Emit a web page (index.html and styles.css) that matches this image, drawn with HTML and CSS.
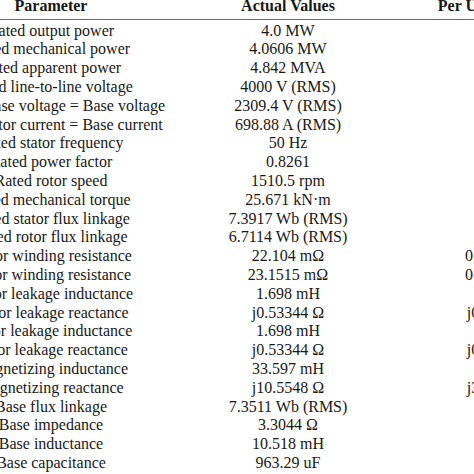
FILE: index.html
```html
<!DOCTYPE html>
<html>
<head>
<meta charset="utf-8">
<link rel="stylesheet" href="styles.css">
</head>
<body>
<div class="sheet">
  <div class="row head">
    <div>Parameter</div>
    <div>Actual Values</div>
    <div>Per Unit Values</div>
  </div>
  <div class="rows">
    <div class="row"><div>Rated output power</div><div>4.0 MW</div><div></div></div>
    <div class="row"><div>Rated mechanical power</div><div>4.0606 MW</div><div></div></div>
    <div class="row"><div>Rated apparent power</div><div>4.842 MVA</div><div></div></div>
    <div class="row"><div>Rated line-to-line voltage</div><div>4000 V (RMS)</div><div></div></div>
    <div class="row"><div>Rated phase voltage = Base voltage</div><div>2309.4 V (RMS)</div><div></div></div>
    <div class="row"><div>Rated stator current = Base current</div><div>698.88 A (RMS)</div><div></div></div>
    <div class="row"><div>Rated stator frequency</div><div>50 Hz</div><div></div></div>
    <div class="row"><div>Rated power factor</div><div>0.8261</div><div></div></div>
    <div class="row"><div>Rated rotor speed</div><div>1510.5 rpm</div><div></div></div>
    <div class="row"><div>Rated mechanical torque</div><div>25.671 kN·m</div><div></div></div>
    <div class="row"><div>Rated stator flux linkage</div><div>7.3917 Wb (RMS)</div><div></div></div>
    <div class="row"><div>Rated rotor flux linkage</div><div>6.7114 Wb (RMS)</div><div></div></div>
    <div class="row"><div>Stator winding resistance</div><div>22.104 mΩ</div><div>0.00669</div></div>
    <div class="row"><div>Rotor winding resistance</div><div>23.1515 mΩ</div><div>0.00701</div></div>
    <div class="row"><div>Stator leakage inductance</div><div>1.698 mH</div><div></div></div>
    <div class="row"><div>Stator leakage reactance</div><div>j0.53344 Ω</div><div>j0.1614</div></div>
    <div class="row"><div>Rotor leakage inductance</div><div>1.698 mH</div><div></div></div>
    <div class="row"><div>Rotor leakage reactance</div><div>j0.53344 Ω</div><div>j0.1614</div></div>
    <div class="row"><div>Magnetizing inductance</div><div>33.597 mH</div><div></div></div>
    <div class="row"><div>Magnetizing reactance</div><div>j10.5548 Ω</div><div>j3.1942</div></div>
    <div class="row"><div>Base flux linkage</div><div>7.3511 Wb (RMS)</div><div></div></div>
    <div class="row"><div>Base impedance</div><div>3.3044 Ω</div><div></div></div>
    <div class="row"><div>Base inductance</div><div>10.518 mH</div><div></div></div>
    <div class="row"><div>Base capacitance</div><div>963.29 uF</div><div></div></div>
  </div>
</div>
</body>
</html>
```

FILE: styles.css
```css
html, body {
  margin: 0;
  padding: 0;
  background: #ffffff;
  overflow: hidden;
}
body {
  width: 474px;
  height: 474px;
  font-family: "Liberation Serif", "Times New Roman", serif;
  font-size: 16px;
  color: #181818;
}
.sheet {
  margin-top: -3.3px;
  margin-left: -130px;
  width: 768px;
}
.row {
  display: grid;
  grid-template-columns: 362px 112px 294px;
  line-height: 18.8px;
  white-space: nowrap;
}
.row > div {
  text-align: center;
  display: flex;
  justify-content: center;
}
.head {
  font-weight: bold;
  padding-bottom: 3.5px;
  border-bottom: 1px solid #6a6a6a;
}
.rows {
  padding-top: 1.7px;
}
```
